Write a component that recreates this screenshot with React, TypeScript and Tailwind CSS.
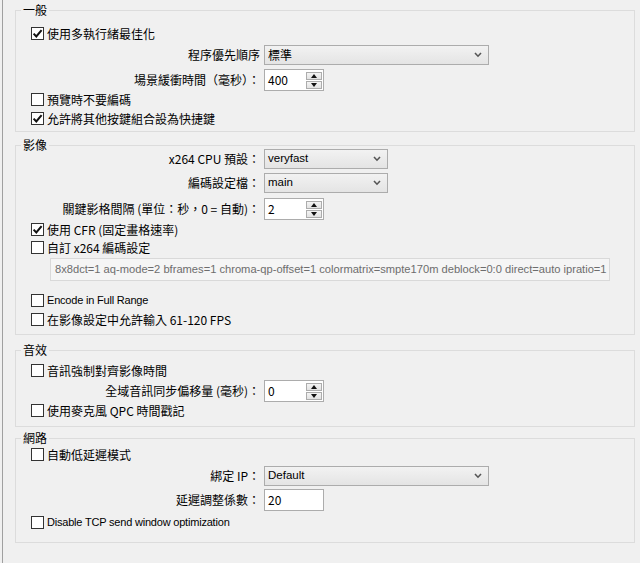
import type { ReactNode } from "react";

// Settings panel, "進階" tab — four group boxes stacked in a scroll area.

const LATIN = "font-['Liberation_Sans',sans-serif] text-[11px] tracking-[-0.2px]";

function Tick() {
  return (
    <svg viewBox="0 0 11 11" className="h-[11px] w-[11px]">
      <path d="M1.6 5.6 L4.3 8.4 L9.6 2.2" fill="none" stroke="#111" strokeWidth="2" />
    </svg>
  );
}

function Check({
  label,
  checked = false,
  latin = false,
  className = "",
}: {
  label: string;
  checked?: boolean;
  latin?: boolean;
  className?: string;
}) {
  return (
    <div className={`ml-[10px] flex h-[13px] items-center gap-[3px] ${className}`}>
      <span className="flex h-[13px] w-[13px] shrink-0 items-center justify-center border border-[#333333] bg-white">
        {checked && <Tick />}
      </span>
      <span className={`whitespace-nowrap leading-[13px] ${latin ? LATIN : ""}`}>{label}</span>
    </div>
  );
}

function Row({ label, children, className = "" }: { label: string; children: ReactNode; className?: string }) {
  return (
    <div className={`flex items-center gap-[4px] ${className}`}>
      <span className="w-[239px] whitespace-nowrap text-right">{label}</span>
      {children}
    </div>
  );
}

function Chevron() {
  return (
    <svg viewBox="0 0 8 6" className="h-[6px] w-[8px]">
      <path d="M1 1 L4 4.2 L7 1" fill="none" stroke="#555" strokeWidth="1.6" />
    </svg>
  );
}

function Combo({ value, wide = false, latin = false }: { value: string; wide?: boolean; latin?: boolean }) {
  return (
    <div
      className={`flex h-[20px] items-center justify-between border border-[#acacac] bg-linear-to-b from-[#f2f2f2] to-[#e4e4e4] pl-[3px] pr-[6px] ${
        wide ? "w-[225px]" : "w-[124px]"
      }`}
    >
      <span className={latin ? "font-['Liberation_Sans',sans-serif] text-[11.5px]" : ""}>{value}</span>
      <Chevron />
    </div>
  );
}

function SpinBtn({ up }: { up: boolean }) {
  return (
    <span className="flex h-[8px] w-[16px] items-center justify-center border border-[#acacac] bg-linear-to-b from-[#f4f4f4] to-[#e2e2e2]">
      <svg viewBox="0 0 6 4" className="h-[4px] w-[6px]">
        <path d={up ? "M0 4 L3 0 L6 4 Z" : "M0 0 L3 4 L6 0 Z"} fill="#111" />
      </svg>
    </span>
  );
}

function Spin({ value }: { value: string }) {
  return (
    <div className="flex h-[22px] w-[60px] items-center border border-[#acacac] bg-white pl-[3px] pr-[1px]">
      <span className="flex-1">{value}</span>
      <div className="flex flex-col gap-[1px]">
        <SpinBtn up />
        <SpinBtn up={false} />
      </div>
    </div>
  );
}

function Field({ value }: { value: string }) {
  return (
    <div className="flex h-[22px] w-[60px] items-center border border-[#acacac] bg-white pl-[3px]">
      {value}
    </div>
  );
}

function Group({ title, children, className = "" }: { title: string; children: ReactNode; className?: string }) {
  return (
    <fieldset className={`w-[620px] border border-[#dcdcdc] pl-[5px] ${className}`}>
      <legend className="px-[2px] leading-[16px]">{title}</legend>
      <div className="flex flex-col">{children}</div>
    </fieldset>
  );
}

export default function App() {
  return (
    <div className="h-[563px] w-[640px] overflow-hidden bg-[#f0f0f0] font-['Noto_Sans_CJK_TC',sans-serif] text-[12px] text-black">
      <div className="ml-[2px] h-full border-l border-[#a0a0a0] pl-[12px] pt-[2px]">
        <Group title="一般" className="pb-[6px]">
          <Check className="mt-[9px]" checked label="使用多執行緒最佳化" />
          <Row className="mt-[5px]" label="程序優先順序">
            <Combo wide value="標準" />
          </Row>
          <Row className="mt-[4px]" label="場景緩衝時間（毫秒）：">
            <Spin value="400" />
          </Row>
          <Check className="mt-[2px]" label="預覽時不要編碼" />
          <Check className="mt-[6px]" checked label="允許將其他按鍵組合設為快捷鍵" />
        </Group>

        <Group title="影像" className="mt-[5px] pb-[8px]">
          <Row className="-mt-[4px]" label="x264 CPU 預設：">
            <Combo latin value="veryfast" />
          </Row>
          <Row className="mt-[4px]" label="編碼設定檔：">
            <Combo latin value="main" />
          </Row>
          <Row className="mt-[5px]" label="關鍵影格間隔 (單位：秒，0 = 自動)：">
            <Spin value="2" />
          </Row>
          <Check className="mt-[3px]" checked label="使用 CFR (固定畫格速率)" />
          <Check className="mt-[5px]" label="自訂 x264 編碼設定" />
          <div className="ml-[29px] mt-[4px] flex h-[23px] w-[560px] items-center overflow-hidden whitespace-nowrap border border-[#d9d9d9] bg-[#f5f5f5] pl-[4px] font-['Liberation_Sans',sans-serif] text-[11.15px] text-[#6d6d6d]">
            8x8dct=1 aq-mode=2 bframes=1 chroma-qp-offset=1 colormatrix=smpte170m deblock=0:0 direct=auto ipratio=1
          </div>
          <Check className="mt-[13px]" latin label="Encode in Full Range" />
          <Check className="mt-[6px]" label="在影像設定中允許輸入 61-120 FPS" />
        </Group>

        <Group title="音效" className="mt-[7px] pb-[9px]">
          <Check className="mt-[6px]" label="音訊強制對齊影像時間" />
          <Row className="mt-[3px]" label="全域音訊同步偏移量 (毫秒)：">
            <Spin value="0" />
          </Row>
          <Check className="mt-[2px]" label="使用麥克風 QPC 時間戳記" />
        </Group>

        <Group title="網路" className="mt-[3px] pb-[13px]">
          <Check className="mt-[2px]" label="自動低延遲模式" />
          <Row className="mt-[5px]" label="綁定 IP：">
            <Combo wide latin value="Default" />
          </Row>
          <Row className="mt-[3px]" label="延遲調整係數：">
            <Field value="20" />
          </Row>
          <Check className="mt-[5px]" latin label="Disable TCP send window optimization" />
        </Group>
      </div>
    </div>
  );
}
